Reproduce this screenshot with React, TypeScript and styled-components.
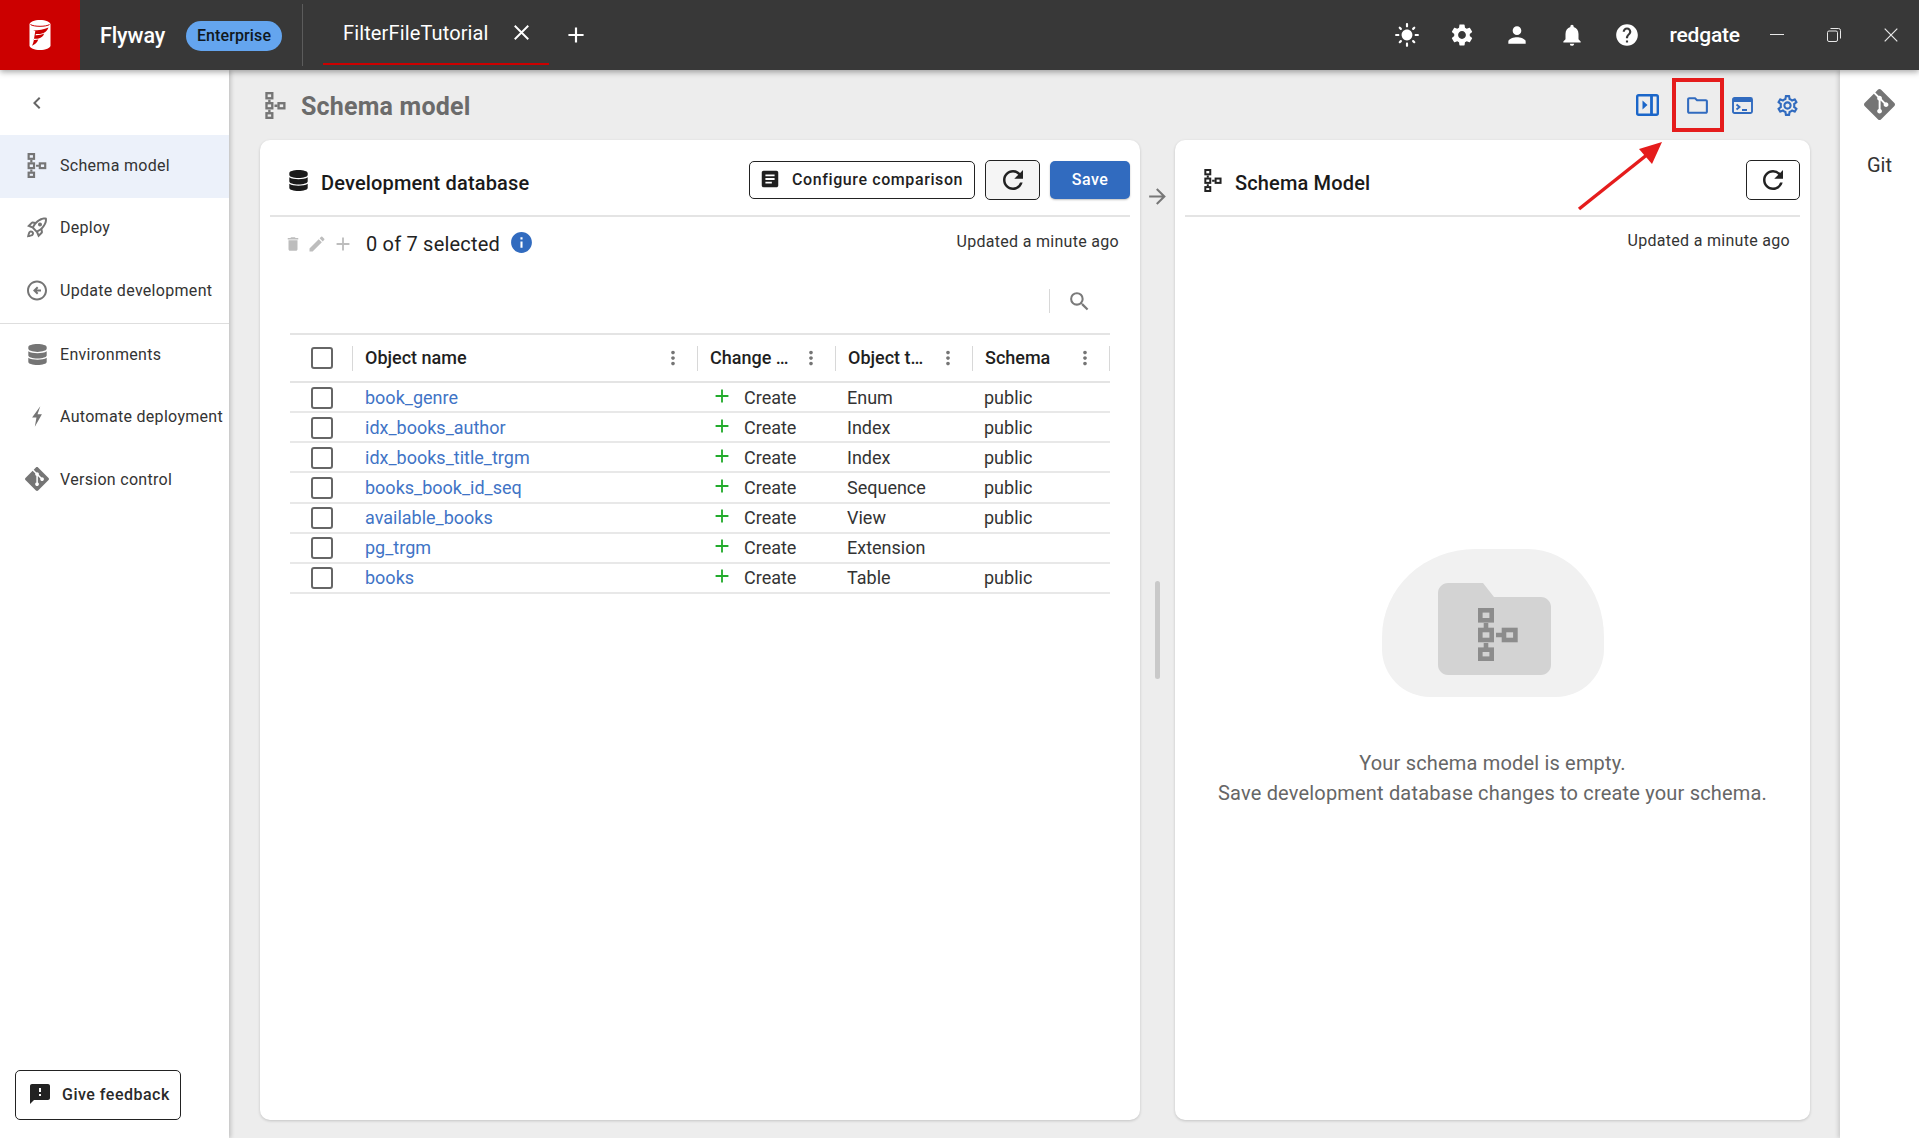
import React from 'react';
import styled, { createGlobalStyle } from 'styled-components';
import {
  MdAdd, MdArrowForward, MdArticle, MdChevronLeft, MdDelete, MdEdit, MdFeedback,
  MdHelp, MdInfo, MdLightMode, MdMoreVert, MdNotifications, MdOutlineArrowCircleLeft, MdOutlineFolder,
  MdOutlineRocketLaunch, MdOutlineSettings, MdPerson, MdRefresh, MdSearch, MdSettings,
} from 'react-icons/md';
import { FaDatabase } from 'react-icons/fa';
import { SiGit } from 'react-icons/si';

const Global = createGlobalStyle`
  html, body { margin: 0; height: 100%; overflow: hidden; }
  body { font-family: Roboto, "Liberation Sans", sans-serif; background: #ededed; color: #1f1f1f; }
  #root { height: 1138px; }
  * { box-sizing: border-box; }
`;

const Page = styled.div`display: flex; flex-direction: column; width: 1919px; height: 1138px; overflow: hidden;`;
const TopBar = styled.header`
  display: flex; align-items: stretch; height: 70px; background: #383838; color: #fff; flex: none;
  position: relative; z-index: 3; box-shadow: 0 2px 6px rgba(0,0,0,.35);
`;
const LogoTile = styled.div`width: 80px; background: #cc0000; display: flex; align-items: center; justify-content: center;`;
const Product = styled.div`margin-left: 20px; display: flex; align-items: center; font-size: 21.5px; font-weight: 500; width: 66px; letter-spacing: -.1px;`;
const Badge = styled.div`
  margin: 21px 0 19px 20px; width: 96px; border-radius: 15px; background: #64a5ef; color: #101820; padding-bottom: 2px;
  display: flex; align-items: center; justify-content: center; font-size: 16px; font-weight: 500; letter-spacing: .12px;
`;
const BarDivider = styled.div`width: 1px; margin: 4px 0 4px 20px; background: #5c5c5c;`;
const Tab = styled.div`
  margin: 0 0 5px 20px; width: 226px; border-bottom: 2px solid #cc0000; display: flex; align-items: center;
  padding: 2px 20px 0 20px; font-size: 20px; letter-spacing: .13px; justify-content: space-between;
`;
const NewTab = styled.div`margin-left: 14px; display: flex; align-items: center; width: 26px;`;
const BarEnd = styled.div`margin-left: auto; display: flex; align-items: stretch;`;
const BarIcon = styled.div`width: 55px; display: flex; align-items: center; justify-content: center;`;
const Redgate = styled.div`margin-left: 15px; width: 70px; display: flex; align-items: center; font-size: 21px; font-weight: 500; letter-spacing: -.2px;`;
const WinButton = styled.div`width: 57px; display: flex; align-items: center; justify-content: center; color: #e8e8e8; margin-left: ${p => p.$first ? '8.5px' : '0'};`;
const MinLine = styled.span`width: 14px; height: 1px; background: #e8e8e8; margin-bottom: 2px;`;

const Body = styled.div`display: flex; flex: 1; min-height: 0;`;
const Sidebar = styled.nav`
  width: 229px; background: #fff; display: flex; flex-direction: column; flex: none;
  box-shadow: 2px 0 4px rgba(0,0,0,.18); position: relative; z-index: 2;
`;
const BackRow = styled.div`height: 65px; display: flex; align-items: center; padding-left: 25px; color: #666;`;
const NavItem = styled.div`
  height: 62.5px; display: flex; align-items: center; gap: 11px; padding: 0 0 2px 25px; font-size: 16px; letter-spacing: .3px; color: #333;
  background: ${p => p.$active ? '#ecf1fa' : 'transparent'};
  white-space: nowrap;
`;
const NavIcon = styled.span`width: 24px; height: 24px; display: flex; align-items: center; justify-content: center; color: #757575; flex: none;`;
const NavRule = styled.div`height: 1px; background: #dedede; flex: none; margin-top: .5px;`;
const SideFoot = styled.div`margin-top: auto; padding: 0 0 18px 15px;`;
const FeedbackButton = styled.div`
  width: 166px; height: 50px; border: 1.5px solid #222; border-radius: 5px; display: flex; align-items: center; gap: 10px; padding: 0 0 2px 12px;
  font-size: 16px; font-weight: 500; letter-spacing: .5px; color: #2a2a2a;
`;

const Main = styled.main`flex: 1; display: flex; flex-direction: column; padding: 0 30px 18px 31px; min-width: 0;`;
const TitleRow = styled.div`height: 70px; flex: none; display: flex; align-items: center; padding-left: 5px;`;
const PageTitle = styled.h1`margin: 2px 0 0 15px; font-size: 25px; font-weight: 700; letter-spacing: .2px; color: #6b6b6b;`;
const Tools = styled.div`margin-left: auto; display: flex; align-items: stretch; height: 54px;`;
const Tool = styled.div`
  width: 45px; display: flex; align-items: center; justify-content: center; color: #316bbf; position: relative;
  margin-right: ${p => p.$gap ? '5.5px' : '0'};
`;
const Highlight = styled.div`position: absolute; left: -3px; top: 0; width: 52px; height: 54px; border: 4px solid #e51c1c;`;
const Pointer = styled.svg`position: absolute; left: -99px; top: 62px; z-index: 5;`;
const Panels = styled.div`display: flex; flex: 1; min-height: 0;`;
const Card = styled.section`
  width: ${p => p.$w}px; flex: none; background: #fff; border-radius: 10px; display: flex; flex-direction: column;
  box-shadow: 0 1px 3px rgba(0,0,0,.18);
`;
const Gutter = styled.div`width: 35px; flex: none; display: flex; flex-direction: column; align-items: center; color: #777; padding-top: 44px;`;
const Handle = styled.div`width: 5px; height: 98px; background: #c9c9c9; border-radius: 3px; margin-top: 372px;`;
const CardHead = styled.div`
  margin: 0 10px; height: 77px; flex: none; border-bottom: 2px solid #e4e4e4; display: flex; align-items: center; padding: 6px 0 0 ${p => p.$pad}px; color: #1a1a1a;
`;
const CardTitle = styled.h2`margin: 4px 0 0 ${p => p.$gap}px; font-size: 20px; font-weight: 500; letter-spacing: .15px; color: #1a1a1a;`;
const HeadActions = styled.div`margin: -1px 0 0 auto; display: flex; align-items: center; gap: 10px;`;
const Button = styled.div`
  width: 226px; height: 38px; border: 1.5px solid #222; border-radius: 5px; display: flex; align-items: center; padding: 0 0 2px 9px; gap: 11px;
  font-size: 16px; font-weight: 500; letter-spacing: .6px; color: #1f1f1f; white-space: nowrap;
`;
const IconButton = styled.div`
  width: ${p => p.$w}px; height: 40px; border: 1.5px solid #222; border-radius: 5px; display: flex; align-items: center; justify-content: center;
  background: ${p => p.$tint ? '#f5f5f5' : '#fff'}; color: #222;
`;
const SaveButton = styled.div`
  width: 80px; height: 38px; border-radius: 5px; background: #316bbf; color: #fff; display: flex; align-items: center; justify-content: center; padding-bottom: 2px;
  font-size: 16px; font-weight: 500; letter-spacing: .5px; box-shadow: 0 1px 2px rgba(0,0,0,.25);
`;
const SelectBar = styled.div`height: 54px; flex: none; display: flex; align-items: center; padding: 0 21px 0 24px;`;
const Disabled = styled.div`display: flex; align-items: center; color: #bdbdbd; gap: 5px;`;
const SelCount = styled.div`margin-left: 12px; font-size: 20px; letter-spacing: .2px; color: #222;`;
const Info = styled.div`margin: -3px 0 0 9px; display: flex; color: #316bbf;`;
const Updated = styled.div`margin: -6px 0 0 auto; font-size: 16px; letter-spacing: .3px; color: #333;`;
const SearchRow = styled.div`height: 24px; margin-top: 18px; flex: none; display: flex; align-items: center; justify-content: flex-end; padding-right: 48px; color: #7a7a7a;`;
const SearchRule = styled.div`width: 1px; height: 24px; background: #d8d8d8; margin-right: 17px;`;
const Table = styled.div`margin: 20px 30px 0; border-top: 2px solid #e4e4e4;`;
const cols = '62px 345px 138px 137px 137px 1px';
const HeadRow = styled.div`display: grid; grid-template-columns: ${cols}; height: 48px; border-bottom: 2px solid #e4e4e4; align-items: center; font-size: 18px; font-weight: 500; color: #1f1f1f;`;
const Row = styled.div`display: grid; grid-template-columns: ${cols}; height: 30.15px; border-bottom: 2px solid #e8e8e8; align-items: center; font-size: 18px; color: #333;`;
const CheckCell = styled.div`padding: ${p => p.$head ? '0' : '1px'} 0 0 21px; display: flex; align-items: center; margin-top: ${p => p.$head ? '-1px' : '0'};`;
const Box = styled.div`width: 22px; height: 22px; border: 2.5px solid #666; border-radius: 3px;`;
const HeadCell = styled.div`
  height: 25px; border-left: 1px solid #d8d8d8; display: flex; align-items: center; justify-content: space-between; padding: 0 13px 2px 12px; white-space: nowrap;
`;
const EndCell = styled.div`height: 25px; border-left: 1px solid #d8d8d8;`;
const Dots = styled.span`display: flex; color: #757575; margin-top: 2px;`;
const NameCell = styled.div`padding-left: 13px; color: #3f74c6;`;
const ChangeCell = styled.div`padding-left: 14px; display: flex; align-items: center; gap: 11px; color: #333;`;
const PlainCell = styled.div`padding-left: 12px; color: #333;`;
const Plus = styled.span`display: flex; color: #22ab2c; margin-top: -3px;`;
const Stamp = styled.div`height: 47px; flex: none; display: flex; align-items: center; justify-content: flex-end; padding-right: 20px; font-size: 16px; letter-spacing: .3px; color: #333;`;
const Empty = styled.div`display: flex; flex-direction: column; align-items: center; padding-top: 285px;`;
const Blob = styled.div`
  width: 222px; height: 148px; background: #f1f1f1; display: flex; align-items: center; justify-content: center; padding: 12px 0 0 3px;
  border-radius: 93px 76px 48px 48px / 88px 88px 48px 48px;
`;
const EmptyText = styled.p`margin: 51px 0 0; font-size: 20px; line-height: 30px; color: #666; text-align: center; letter-spacing: .18px;`;
const Rail = styled.aside`
  width: 79px; flex: none; background: #fff; display: flex; flex-direction: column; align-items: center; color: #757575; position: relative; z-index: 2;
  box-shadow: -2px 0 4px rgba(0,0,0,.14); padding-top: 19px;
`;
const RailLabel = styled.div`margin-top: 33px; font-size: 20px; color: #333;`;

const SchemaIcon = ({ w, h, color }: { w: number; h: number; color: string }) => (
  <svg width={w} height={h} viewBox="0 0 40 53" fill="none" stroke={color} strokeWidth="4.6">
    <path d="M8 15v5M8 35v5M18 27h6" />
    <rect x="2.3" y="2.3" width="11.4" height="10" />
    <rect x="2.3" y="22" width="11.4" height="10" />
    <rect x="2.3" y="41.7" width="11.4" height="9" />
    <rect x="26" y="22" width="11.4" height="10" />
  </svg>
);

const FlywayLogo = () => (
  <svg width="22" height="30" viewBox="0 0 21 30">
    <path fill="#fff" d="M0 4.500C0 1.800 5 0 10.500 0S21 1.800 21 4.500v21c0 2.700-5 4.500-10.500 4.500S0 28.200 0 25.500Z" />
    <path fill="none" stroke="#cc0000" strokeWidth="1" d="M1 4.500c3 2.400 16 2.400 19 0" />
    <path fill="#cc0000" d="M3.500 10.500C9 10.500 14.500 9.500 19 7.500c-1.200 3.200-3.500 5.200-6.500 6-2 .5-4 .6-6 .4l-.6 1.300c3 .2 6-.4 8.800-1.700-1 2.800-2.900 4.400-5.500 5-1.500.3-3 .4-4.700.2l-.5 1.300c1.700.2 3.300 0 4.800-.4-1 2.800-3 5-6.300 6.200 1.200-2.400 1.800-4.600 2-7l1.300-7.700Z" />
  </svg>
);

const BoltIcon = () => (
  <svg width="12" height="21" viewBox="0 0 11 19">
    <path fill="#757575" d="M8.500 0L1 10.500h4L3.500 19 10 7.500H6Z" />
  </svg>
);

const PanelIcon = () => (
  <svg width="23" height="22" viewBox="0 0 23 22" fill="none" stroke="#1b66c9" strokeWidth="2.4">
    <rect x="1.200" y="1.200" width="20.600" height="19.600" rx="1.500" />
    <path d="M15.500 1v20" strokeWidth="2.800" />
    <path d="M6.500 6.500l5 4.500-5 4.500Z" fill="#1b66c9" stroke="none" />
  </svg>
);

const TerminalIcon = () => (
  <svg width="21" height="17" viewBox="0 0 21 17" fill="none" stroke="#316bbf" strokeWidth="1.900">
    <rect x="1" y="1" width="19" height="15" rx="1.500" />
    <path d="M1 3.500h19" strokeWidth="3" />
    <path d="M4.500 7.500l3 2.500-3 2.500M10 13h5" />
  </svg>
);

const RestoreIcon = () => (
  <svg width="14" height="14" viewBox="0 0 14 14" fill="none" stroke="#e8e8e8" strokeWidth="1">
    <rect x=".5" y="3" width="10" height="10.500" rx="1.500" />
    <path d="M3.500 .5h8a2 2 0 0 1 2 2v8" />
  </svg>
);

const ThinClose = ({ size, weight }: { size: number; weight: number }) => (
  <svg width={size} height={size} viewBox="0 0 14 14" fill="none" stroke="currentColor" strokeWidth={weight}>
    <path d="M.7 .7l12.600 12.600M13.300 .7L.7 13.300" />
  </svg>
);

const FolderArt = () => (
  <svg width="113" height="92" viewBox="0 0 113 92">
    <path fill="#d3d3d3" d="M10 0h35l11 14h47c5.500 0 10 4.500 10 10v58c0 5.500-4.500 10-10 10H10C4.500 92 0 87.500 0 82V10C0 4.500 4.500 0 10 0Z" />
    <g transform="translate(40 25)"><path d="M8 15v5M8 35v5M18 27h6" stroke="#8c8c8c" strokeWidth="4.600" /><g fill="none" stroke="#8c8c8c" strokeWidth="4.600"><rect x="2.300" y="2.300" width="11.400" height="10" /><rect x="2.300" y="22" width="11.400" height="10" /><rect x="2.300" y="41.700" width="11.400" height="9" /><rect x="26" y="22" width="11.400" height="10" /></g></g>
  </svg>
);

const rows = [
  ['book_genre', 'Enum', 'public'],
  ['idx_books_author', 'Index', 'public'],
  ['idx_books_title_trgm', 'Index', 'public'],
  ['books_book_id_seq', 'Sequence', 'public'],
  ['available_books', 'View', 'public'],
  ['pg_trgm', 'Extension', ''],
  ['books', 'Table', 'public'],
];

const heads = ['Object name', 'Change …', 'Object t…', 'Schema'];

export default function App() {
  return (
    <Page>
      <Global />
      <TopBar>
        <LogoTile><FlywayLogo /></LogoTile>
        <Product>Flyway</Product>
        <Badge>Enterprise</Badge>
        <BarDivider />
        <Tab>FilterFileTutorial<ThinClose size={15} weight={1.8} /></Tab>
        <NewTab><MdAdd size={26} /></NewTab>
        <BarEnd>
          <BarIcon><MdLightMode size={26} /></BarIcon>
          <BarIcon><MdSettings size={26} /></BarIcon>
          <BarIcon><MdPerson size={26} /></BarIcon>
          <BarIcon><MdNotifications size={26} /></BarIcon>
          <BarIcon><MdHelp size={26} /></BarIcon>
          <Redgate>redgate</Redgate>
          <WinButton $first><MinLine /></WinButton>
          <WinButton><RestoreIcon /></WinButton>
          <WinButton><ThinClose size={14} weight={1.2} /></WinButton>
        </BarEnd>
      </TopBar>
      <Body>
        <Sidebar>
          <BackRow><MdChevronLeft size={24} /></BackRow>
          <NavItem $active><NavIcon><SchemaIcon w={20} h={25} color="#757575" /></NavIcon>Schema model</NavItem>
          <NavItem><NavIcon><MdOutlineRocketLaunch size={25} /></NavIcon>Deploy</NavItem>
          <NavItem><NavIcon><MdOutlineArrowCircleLeft size={25} /></NavIcon>Update development</NavItem>
          <NavRule />
          <NavItem><NavIcon><FaDatabase size={21} /></NavIcon>Environments</NavItem>
          <NavItem><NavIcon><BoltIcon /></NavIcon>Automate deployment</NavItem>
          <NavItem><NavIcon><SiGit size={24} /></NavIcon>Version control</NavItem>
          <SideFoot>
            <FeedbackButton><MdFeedback size={24} color="#222" />Give feedback</FeedbackButton>
          </SideFoot>
        </Sidebar>
        <Main>
          <TitleRow>
            <SchemaIcon w={21} h={27} color="#757575" />
            <PageTitle>Schema model</PageTitle>
            <Tools>
              <Tool $gap><PanelIcon /></Tool>
              <Tool>
                <MdOutlineFolder size={25} />
                <Highlight />
                <Pointer width="90" height="72" viewBox="0 0 90 72">
                  <path d="M3 69L72 14" stroke="#e51c1c" strokeWidth="3.500" fill="none" />
                  <path d="M86 2L76 24 63 9Z" fill="#e51c1c" />
                </Pointer>
              </Tool>
              <Tool><TerminalIcon /></Tool>
              <Tool><MdOutlineSettings size={25} /></Tool>
            </Tools>
          </TitleRow>
          <Panels>
            <Card $w={880}>
              <CardHead $pad={17.5}>
                <FaDatabase size={21} />
                <CardTitle $gap={12.5}>Development database</CardTitle>
                <HeadActions>
                  <Button><MdArticle size={22} />Configure comparison</Button>
                  <IconButton $w={55} $tint><MdRefresh size={30} /></IconButton>
                  <SaveButton>Save</SaveButton>
                </HeadActions>
              </CardHead>
              <SelectBar>
                <Disabled><MdDelete size={18} /><MdEdit size={20} /><MdAdd size={22} /></Disabled>
                <SelCount>0 of 7 selected</SelCount>
                <Info><MdInfo size={25} /></Info>
                <Updated>Updated a minute ago</Updated>
              </SelectBar>
              <SearchRow><SearchRule /><MdSearch size={25} /></SearchRow>
              <Table>
                <HeadRow>
                  <CheckCell $head><Box /></CheckCell>
                  {heads.map(h => <HeadCell key={h}>{h}<Dots><MdMoreVert size={22} /></Dots></HeadCell>)}
                  <EndCell />
                </HeadRow>
                {rows.map(r => (
                  <Row key={r[0]}>
                    <CheckCell><Box /></CheckCell>
                    <NameCell>{r[0]}</NameCell>
                    <ChangeCell><Plus><MdAdd size={22} /></Plus>Create</ChangeCell>
                    <PlainCell>{r[1]}</PlainCell>
                    <PlainCell>{r[2]}</PlainCell>
                  </Row>
                ))}
              </Table>
            </Card>
            <Gutter>
              <MdArrowForward size={25} />
              <Handle />
            </Gutter>
            <Card $w={635}>
              <CardHead $pad={19}>
                <SchemaIcon w={18} h={23} color="#222" />
                <CardTitle $gap={13}>Schema Model</CardTitle>
                <HeadActions>
                  <IconButton $w={54}><MdRefresh size={30} /></IconButton>
                </HeadActions>
              </CardHead>
              <Stamp>Updated a minute ago</Stamp>
              <Empty>
                <Blob><FolderArt /></Blob>
                <EmptyText>Your schema model is empty.<br />Save development database changes to create your schema.</EmptyText>
              </Empty>
            </Card>
          </Panels>
        </Main>
        <Rail>
          <SiGit size={31} />
          <RailLabel>Git</RailLabel>
        </Rail>
      </Body>
    </Page>
  );
}
